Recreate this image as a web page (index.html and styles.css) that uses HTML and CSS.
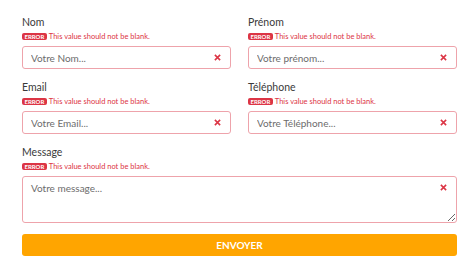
FILE: index.html
```html
<!DOCTYPE html>
<html lang="fr">
<head>
  <meta charset="UTF-8" />
  <title>Contact</title>
  <meta name="viewport" content="width=device-width, initial-scale=1.0"/>
  <link rel="stylesheet" href="styles.css">
</head>
<body>

<form class="contact-form">
  <div class="row">
    <div class="field">
      <label for="nom">Nom</label>
      <p class="error"><span class="badge">Error</span>This value should not be blank.</p>
      <div class="control">
        <input type="text" id="nom" placeholder="Votre Nom...">
        <svg class="clear" viewBox="0 0 8 8"><path d="M1 1L7 7M7 1L1 7"/></svg>
      </div>
    </div>
    <div class="field">
      <label for="prenom">Prénom</label>
      <p class="error"><span class="badge">Error</span>This value should not be blank.</p>
      <div class="control">
        <input type="text" id="prenom" placeholder="Votre prénom...">
        <svg class="clear" viewBox="0 0 8 8"><path d="M1 1L7 7M7 1L1 7"/></svg>
      </div>
    </div>
  </div>

  <div class="row">
    <div class="field">
      <label for="email">Email</label>
      <p class="error"><span class="badge">Error</span>This value should not be blank.</p>
      <div class="control">
        <input type="email" id="email" placeholder="Votre Email...">
        <svg class="clear" viewBox="0 0 8 8"><path d="M1 1L7 7M7 1L1 7"/></svg>
      </div>
    </div>
    <div class="field">
      <label for="tel">Téléphone</label>
      <p class="error"><span class="badge">Error</span>This value should not be blank.</p>
      <div class="control">
        <input type="tel" id="tel" placeholder="Votre Téléphone...">
        <svg class="clear" viewBox="0 0 8 8"><path d="M1 1L7 7M7 1L1 7"/></svg>
      </div>
    </div>
  </div>

  <div class="field">
    <label for="message">Message</label>
    <p class="error"><span class="badge">Error</span>This value should not be blank.</p>
    <div class="control">
      <textarea id="message" placeholder="Votre message..."></textarea>
      <svg class="clear" viewBox="0 0 8 8"><path d="M1 1L7 7M7 1L1 7"/></svg>
    </div>
  </div>

  <button type="submit">Envoyer</button>
</form>

</body>
</html>
```

FILE: styles.css
```css
* {
  margin: 0;
  padding: 0;
  box-sizing: border-box;
  font-family: Lato, "Open Sans", sans-serif;
}

body {
  background: #fff;
  padding: 15px 17px 0 22px;
}

.row {
  display: grid;
  grid-template-columns: 1fr 1fr;
  gap: 17px;
}

.field {
  margin-bottom: 11px;
}

label {
  display: block;
  font-size: 10.5px;
  line-height: 14px;
  color: #3a3a3a;
}

.error {
  display: flex;
  align-items: center;
  margin: 2px 0 4px;
  height: 11px;
  font-size: 7.5px;
  color: #dc3545;
}

.badge {
  display: inline-block;
  background: #dc3545;
  color: #fff;
  font-size: 6px;
  font-weight: bold;
  line-height: 7px;
  padding: 0 2.5px;
  margin-right: 2px;
  border-radius: 2px;
  text-transform: uppercase;
}

.control {
  position: relative;
}

input, textarea {
  display: block;
  width: 100%;
  height: 23px;
  padding: 0 20px 0 8px;
  border: 1px solid #eea3ab;
  border-radius: 3px;
  font-size: 10px;
  color: #333;
  background: #fff;
}

textarea {
  height: 47px;
  padding-top: 5px;
  resize: vertical;
}

::placeholder {
  color: #6c6c6c;
}

.clear {
  position: absolute;
  right: 10px;
  top: 8px;
  width: 7px;
  height: 7px;
  stroke: #dc3545;
  stroke-width: 1.8;
  fill: none;
}

button {
  display: block;
  width: 100%;
  height: 22px;
  background: #ffa500;
  color: #fff;
  border: none;
  border-radius: 3px;
  font-size: 10px;
  font-weight: bold;
  text-transform: uppercase;
  cursor: pointer;
}
```
